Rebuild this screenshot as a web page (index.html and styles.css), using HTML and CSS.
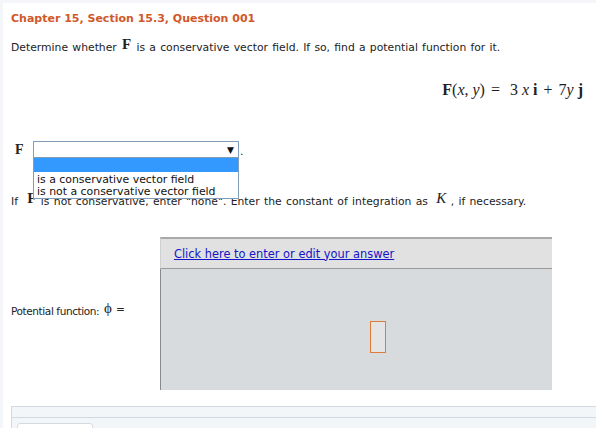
FILE: index.html
```html
<!DOCTYPE html>
<html>
<head>
<meta charset="utf-8">
<link rel="stylesheet" href="styles.css">
</head>
<body>
<div class="page">
  <h1 class="title">Chapter 15, Section 15.3, Question 001</h1>
  <p class="question">Determine whether <span class="bf">F</span> is a conservative vector field. If so, find a potential function for it.</p>
  <div class="formula"><span class="bfm">F</span>(<i>x</i>, <i>y</i>) <span class="op">=</span> &nbsp;3 <i>x</i> <b>i</b> <span class="op">+</span> 7<i>y</i> <b>j</b></div>
  <div class="select-row">
    <span class="flabel">F</span>
    <div class="select-wrap">
      <div class="select"><span class="arrow">▼</span></div>
      <ul class="options">
        <li class="opt sel">&nbsp;</li>
        <li class="opt">is a conservative vector field</li>
        <li class="opt">is not a conservative vector field</li>
      </ul>
    </div>
    <span class="dot">.</span>
  </div>
  <p class="note">If <span class="bf bf-note">F</span> is not conservative, enter "none". Enter the constant of integration as <span class="km">K</span> , if necessary.</p>
  <div class="answer-row">
    <div class="alabel">Potential function: <span class="phi">ϕ</span> <span class="eq">=</span></div>
    <div class="abox">
      <div class="ahead"><a href="#" class="alink">Click here to enter or edit your answer</a></div>
      <div class="abody"><span class="cursor"></span></div>
    </div>
  </div>
  <div class="panel">
    <div class="panel-head"></div>
    <div class="panel-body"><span class="pbtn"></span></div>
  </div>
</div>
</body>
</html>
```
FILE: styles.css
```css
html, body {
  margin: 0;
  padding: 0;
}
body {
  background: #f4f6f9;
  font-family: "DejaVu Sans", Tahoma, sans-serif;
  font-size: 11px;
  color: #222;
  overflow: hidden;
  height: 428px;
}
.page {
  margin: 3px 0 0 3px;
  background: #fff;
  padding: 9px 0 0 8px;
  height: 425px;
  box-sizing: border-box;
  overflow: hidden;
}
.title {
  margin: 0;
  font-size: 11px;
  font-weight: bold;
  color: #d0582a;
  line-height: 14px;
}
.question {
  margin: 10px 0 0 0;
  line-height: 16px;
  font-size: 10.8px;
  word-spacing: 0.8px;
}
.bf {
  font-family: "Liberation Serif", "Times New Roman", serif;
  font-weight: bold;
  font-size: 15px;
  vertical-align: 2px;
  padding: 0 1px;
}
.bf-note {
  padding: 0 0 0 5px;
}
.formula {
  margin: 25px 13px 0 0;
  text-align: right;
  font-family: "Liberation Serif", "Times New Roman", serif;
  font-size: 16px;
  line-height: 18px;
  color: #222;
}
.op {
  padding: 0 2px;
}
.bfm {
  font-weight: bold;
}
.select-row {
  margin-top: 42px;
  display: flex;
  align-items: center;
  height: 17px;
}
.flabel {
  font-family: "Liberation Serif", "Times New Roman", serif;
  font-weight: bold;
  font-size: 14px;
  width: 22px;
  padding-left: 4px;
  box-sizing: border-box;
}
.select-wrap {
  position: relative;
  width: 206px;
  height: 17px;
}
.select {
  box-sizing: border-box;
  width: 206px;
  height: 17px;
  border: 1px solid #7f9db9;
  background: #fff;
  display: flex;
  justify-content: flex-end;
  align-items: center;
}
.arrow {
  font-size: 9px;
  margin-right: 4px;
  color: #111;
}
.options {
  position: absolute;
  left: 0;
  top: 16px;
  width: 206px;
  box-sizing: border-box;
  margin: 0;
  padding: 0;
  list-style: none;
  border: 1px solid #7f9db9;
  background: #fff;
  z-index: 2;
}
.opt {
  font-size: 10.9px;
  line-height: 12px;
  padding-left: 3px;
  color: #111;
}
.opt.sel {
  background: #3399ff;
  height: 14px;
  margin-bottom: 2px;
}
.dot {
  margin-left: 1px;
  align-self: flex-end;
}
.note {
  margin: 32px 0 0 0;
  font-size: 10.8px;
  line-height: 16px;
  word-spacing: 0.9px;
}
.km {
  font-family: "Liberation Serif", "Times New Roman", serif;
  font-style: italic;
  font-size: 15px;
  vertical-align: 2px;
  padding-left: 4px;
}
.answer-row {
  margin-top: 27px;
  display: flex;
  align-items: center;
}
.alabel {
  width: 149px;
  font-size: 10.5px;
  letter-spacing: -0.4px;
  padding-bottom: 11px;
}
.phi {
  font-family: "Liberation Serif", "Times New Roman", serif;
  font-size: 15px;
  vertical-align: 2px;
  letter-spacing: 0;
  padding-left: 2px;
}
.eq {
  vertical-align: 2px;
  padding-left: 1px;
}
.abox {
  width: 392px;
  height: 153px;
  display: flex;
  flex-direction: column;
}
.ahead {
  height: 29px;
  background: #e1e1e1;
  border-top: 2px solid #a9a9a9;
  border-bottom: 1px solid #999;
  border-left: 1px solid #d0d0d0;
  padding-left: 13px;
  display: flex;
  align-items: center;
}
.alink {
  color: #1414c8;
  font-size: 11.4px;
  text-decoration: underline;
}
.abody {
  flex: 1;
  background: #d8dbde;
  border-left: 1px solid #8a8a8a;
  position: relative;
}
.cursor {
  position: absolute;
  left: 209px;
  top: 52px;
  width: 14px;
  height: 30px;
  border: 1px solid #e07a3a;
  background: #e4e4e4;
}
.panel {
  margin-top: 16px;
  border: 1px solid #d3d9e0;
  border-right: none;
  background: #f3f6f9;
}
.panel-head {
  height: 10px;
  border-bottom: 1px solid #d3d9e0;
}
.panel-body {
  height: 30px;
  padding: 5px 0 0 5px;
}
.pbtn {
  display: block;
  width: 74px;
  height: 20px;
  border: 1px solid #d6dbe1;
  border-radius: 3px;
  background: #fff;
}
```
